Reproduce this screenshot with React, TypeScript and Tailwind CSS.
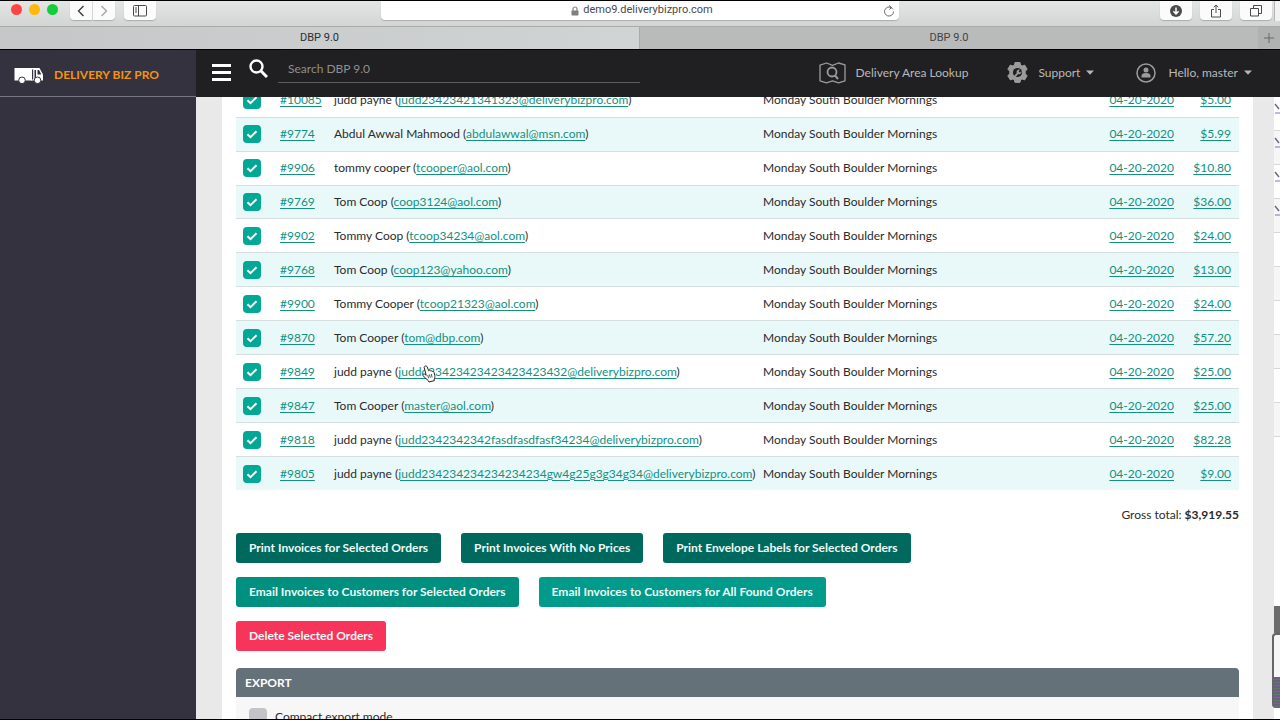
import type { ReactNode } from "react";

type Order = {
  id: string;
  name: string;
  email: string;
  total: string;
};

const ROUTE = "Monday South Boulder Mornings";
const DELIVERY_DATE = "04-20-2020";

const orders: Order[] = [
  { id: "10085", name: "judd payne", email: "judd23423421341323@deliverybizpro.com", total: "$5.00" },
  { id: "9774", name: "Abdul Awwal Mahmood", email: "abdulawwal@msn.com", total: "$5.99" },
  { id: "9906", name: "tommy cooper", email: "tcooper@aol.com", total: "$10.80" },
  { id: "9769", name: "Tom Coop", email: "coop3124@aol.com", total: "$36.00" },
  { id: "9902", name: "Tommy Coop", email: "tcoop34234@aol.com", total: "$24.00" },
  { id: "9768", name: "Tom Coop", email: "coop123@yahoo.com", total: "$13.00" },
  { id: "9900", name: "Tommy Cooper", email: "tcoop21323@aol.com", total: "$24.00" },
  { id: "9870", name: "Tom Cooper", email: "tom@dbp.com", total: "$57.20" },
  { id: "9849", name: "judd payne", email: "juddd23423423423423423432@deliverybizpro.com", total: "$25.00" },
  { id: "9847", name: "Tom Cooper", email: "master@aol.com", total: "$25.00" },
  { id: "9818", name: "judd payne", email: "judd2342342342fasdfasdfasf34234@deliverybizpro.com", total: "$82.28" },
  { id: "9805", name: "judd payne", email: "judd234234234234234234gw4g25g3g34g34@deliverybizpro.com", total: "$9.00" },
];

const ToolbarButton = ({ label, children }: { label: string; children: ReactNode }) => (
  <button
    type="button"
    aria-label={label}
    className="flex h-[19px] w-8 items-center justify-center rounded-b bg-[#fbfbfb] text-[#4a4a4a] shadow-[0_1px_1px_rgba(0,0,0,0.2)]"
  >
    {children}
  </button>
);

const BrowserToolbar = () => (
  <div className="grid h-[26px] grid-cols-[1fr_518px_1fr] items-start border-t border-black bg-linear-to-b from-[#e4e5e5] to-[#d3d4d4]">
    <div className="flex items-start">
      <div className="mt-[3px] ml-[11px] flex gap-[7px]">
        <span className="size-[11px] rounded-full bg-[#fc4645]" />
        <span className="size-[11px] rounded-full bg-[#fdb80f]" />
        <span className="size-[11px] rounded-full bg-[#14cc3c]" />
      </div>
      <div className="mr-[9px] ml-3 flex gap-px">
        <button type="button" aria-label="Back" className="flex h-[19px] w-[22px] items-center justify-center rounded-bl bg-[#fbfbfb] text-[#3c3c3c] shadow-[0_1px_1px_rgba(0,0,0,0.2)]">
          <svg width="8" height="12" viewBox="0 0 8 12" fill="none" stroke="currentColor" strokeWidth="1.4">
            <path d="M6.5 1 1.5 6l5 5" />
          </svg>
        </button>
        <button type="button" aria-label="Forward" className="flex h-[19px] w-[22px] items-center justify-center rounded-br bg-[#fbfbfb] text-[#a6a6a6] shadow-[0_1px_1px_rgba(0,0,0,0.2)]">
          <svg width="8" height="12" viewBox="0 0 8 12" fill="none" stroke="currentColor" strokeWidth="1.4">
            <path d="m1.5 1 5 5-5 5" />
          </svg>
        </button>
      </div>
      <ToolbarButton label="Show sidebar">
        <svg width="14" height="12" viewBox="0 0 14 12" fill="none" stroke="currentColor">
          <rect x="0.5" y="0.5" width="13" height="10.5" rx="1" />
          <path d="M5.5.5V11M2 3h2M2 5h2M2 7h2" />
        </svg>
      </ToolbarButton>
    </div>
    <div className="flex h-[19px] items-center rounded-b bg-white px-1 text-[#4a4a4a] shadow-[0_1px_1px_rgba(0,0,0,0.2)]">
      <div className="flex flex-1 items-center justify-center gap-1 pl-4">
        <svg width="8" height="10" viewBox="0 0 8 10" className="text-[#808080]">
          <path d="M2 5V3a2 2 0 0 1 4 0v2" fill="none" stroke="currentColor" strokeWidth="1.2" />
          <rect x="0.5" y="4.5" width="7" height="5" rx="0.7" fill="currentColor" />
        </svg>
        <span>demo9.deliverybizpro.com</span>
      </div>
      <button type="button" aria-label="Reload">
        <svg width="12" height="12" viewBox="0 0 12 12" fill="none" stroke="#6a6a6a">
          <path d="M9.9 4.3A4.5 4.5 0 1 0 10.5 6.6M6 .5l2.6 2L6.3 4.6" />
        </svg>
      </button>
    </div>
    <div className="flex justify-end gap-2">
      <ToolbarButton label="Downloads">
        <svg width="12" height="12" viewBox="0 0 12 12">
          <circle cx="6" cy="6" r="6" fill="currentColor" />
          <path d="M6 2.6v6M3.4 6.2 6 8.9l2.6-2.7" fill="none" stroke="#fff" strokeWidth="1.5" />
        </svg>
      </ToolbarButton>
      <ToolbarButton label="Share">
        <svg width="12" height="14" viewBox="0 0 12 14" fill="none" stroke="currentColor">
          <path d="M4 5.5H1.5V13h9V5.5H8M6 9V1M3.7 3.2 6 1l2.3 2.2" />
        </svg>
      </ToolbarButton>
      <ToolbarButton label="Show tabs">
        <svg width="12" height="12" viewBox="0 0 12 12" fill="none" stroke="currentColor">
          <path d="M.5 3.5h8V11h-8zM3.500 3.500v-3h8v8h-3" />
        </svg>
      </ToolbarButton>
      <span className="-ml-1.5 h-5 w-1.5 border-l border-[#b5b5b5] bg-[#f2f2f4]" />
    </div>
  </div>
);

const BrowserTabs = () => (
  <div className="flex h-6 border-t border-b border-t-[#a9aaaa] border-b-black text-[#2d2d2d]">
    <button type="button" className="basis-1/2 border-r border-[#a9aaaa] bg-linear-to-r from-[#c5c6c8] to-[#d0d4d4]">
      DBP 9.0
    </button>
    <button type="button" className="flex-1 bg-[#b9bbbb] text-[#444]">
      DBP 9.0
    </button>
    <button type="button" aria-label="New tab" className="flex w-[22px] items-center justify-center bg-[#b0b2b2]">
      <svg width="10" height="10" viewBox="0 0 10 10" stroke="#666">
        <path d="M5 0v10M0 5h10" />
      </svg>
    </button>
  </div>
);

const TruckIcon = () => (
  <svg width="30" height="17" viewBox="0 0 30 17">
    <path d="M.5 1h17.500v12.500H.5z" fill="#fff" />
    <path d="M17 1h8.500L29 7.500v6H17z" fill="#fff" />
    <path d="M18 2.500h1.200v10H18zM20.500 3h1.500v9.500h-1.500zM23.500 3h1.500l2.300 4.500h-3.800z" fill="#34323e" />
    <circle cx="8" cy="13.300" r="3.300" fill="#fff" stroke="#34323e" strokeWidth="1" />
    <circle cx="23.500" cy="13.300" r="3.300" fill="#fff" stroke="#34323e" strokeWidth="1" />
  </svg>
);

const MapSearchIcon = () => (
  <svg width="27" height="22" viewBox="0 0 27 22" fill="none" stroke="#9b9b9b" strokeWidth="1.3">
    <path d="M1 3.200 7.500 1l6 2.300 6-2.300L26 2.800v16l-6.500 2-6-2-6 2L1 18.800z" strokeLinejoin="round" />
    <circle cx="13" cy="10" r="4.500" strokeWidth="1.800" />
    <path d="m16 13.500 3 3.500" strokeWidth="2" />
  </svg>
);

const GearWrenchIcon = () => (
  <svg width="21" height="21" viewBox="0 0 21 21">
    <path
      d="M8 .5h5l.6 2.600 1.500.9 2.600-.9 2.500 4.200-2 1.900v2.600l2 1.900-2.500 4.200-2.600-.9-1.500.9-.6 2.500H8l-.6-2.500-1.500-.9-2.600.9L.8 13.700l2-1.900V9.200l-2-1.900L3.300 3.100l2.600.9 1.500-.9z"
      fill="#9b9b9b"
      stroke="#9b9b9b"
      strokeLinejoin="round"
    />
    <circle cx="10.500" cy="10.500" r="4.600" fill="#202022" />
    <path d="M7 14 9.800 11a2.500 2.500 0 0 1 3.200-3.300l-1.300 1.500.6 1 1 .2L14.500 9a2.500 2.500 0 0 1-3.300 3L8.500 15z" fill="#9b9b9b" />
  </svg>
);

const UserCircleIcon = () => (
  <svg width="20" height="20" viewBox="0 0 20 20">
    <circle cx="10" cy="10" r="9" fill="none" stroke="#9b9b9b" strokeWidth="1.500" />
    <circle cx="10" cy="7" r="2.500" fill="#9b9b9b" />
    <path d="M5.500 14.500V13c0-2 1.500-3 4.500-3s4.500 1 4.500 3v1.500z" fill="#9b9b9b" />
  </svg>
);

const Caret = () => (
  <svg width="8" height="5" viewBox="0 0 8 5" className="ml-1.5">
    <path d="M0 .5h8L4 4.800z" fill="#b5b5b5" />
  </svg>
);

const AppHeader = () => (
  <header className="flex h-[47px] shrink-0 bg-[#202022] text-[#b9b9b9]">
    <a href="#" className="flex w-[196px] shrink-0 items-center gap-2.5 border-b border-[#777581] bg-[#34323e] pt-1 pl-3.5 font-bold text-[#f3920f]">
      <TruckIcon />
      DELIVERY BIZ PRO
    </a>
    <button type="button" aria-label="Menu" className="mb-0.5 ml-4 flex shrink-0 flex-col justify-center gap-1">
      <span className="h-[3px] w-[19px] bg-white" />
      <span className="h-[3px] w-[19px] bg-white" />
      <span className="h-[3px] w-[19px] bg-white" />
    </button>
    <button type="button" aria-label="Search" className="mb-2.5 ml-[18px] shrink-0">
      <svg width="19" height="19" viewBox="0 0 19 19" fill="none" stroke="#fff">
        <circle cx="7.500" cy="7.500" r="6" strokeWidth="2.400" />
        <path d="m12 12 6 6" strokeWidth="3" />
      </svg>
    </button>
    <input
      type="text"
      aria-label="Search"
      placeholder="Search DBP 9.0"
      className="mt-1 ml-2.5 h-[29px] w-[362px] border-b border-[#5c5c5c] bg-transparent px-2.5 outline-none placeholder:text-[#8f8f8f]"
    />
    <nav className="ml-auto flex items-center pr-7 pb-0.5">
      <a href="#" className="flex items-center gap-2.5">
        <MapSearchIcon />
        Delivery Area Lookup
      </a>
      <button type="button" className="ml-[39px] flex items-center">
        <span className="mr-2.5">
          <GearWrenchIcon />
        </span>
        Support
        <Caret />
      </button>
      <button type="button" className="ml-[42px] flex items-center">
        <span className="mr-3">
          <UserCircleIcon />
        </span>
        Hello, master
        <Caret />
      </button>
    </nav>
  </header>
);

const OrderCheckbox = ({ id }: { id: string }) => (
  <label className="grid size-[18px]">
    <input
      type="checkbox"
      defaultChecked
      aria-label={`Select order ${id}`}
      className="col-start-1 row-start-1 size-[18px] appearance-none rounded bg-[#c4c4c8] checked:bg-[#02a896]"
    />
    <svg viewBox="0 0 18 18" className="pointer-events-none col-start-1 row-start-1 size-[18px]" fill="none" stroke="#fff" strokeWidth="2">
      <path d="m4.500 9.200 3 3 6-6" />
    </svg>
  </label>
);

const TableLink = ({ children }: { children: ReactNode }) => (
  <a href="#" className="text-[#12917f] underline underline-offset-2">
    {children}
  </a>
);

const OrdersTable = () => (
  <table className="h-[406px] w-full table-fixed border-collapse text-left whitespace-nowrap">
    <colgroup>
      <col className="w-9" />
      <col className="w-[54px]" />
      <col className="w-[429px]" />
      <col />
      <col className="w-20" />
      <col className="w-[57px]" />
    </colgroup>
    <tbody>
      {orders.map((order) => (
        <tr key={order.id} className="border-b border-[#d5dfe0] last:border-0 even:bg-[#e9f9fa]">
          <td className="pl-[7px]">
            <OrderCheckbox id={order.id} />
          </td>
          <td className="pl-2">
            <TableLink>#{order.id}</TableLink>
          </td>
          <td className="pl-2">
            {order.name} (<TableLink>{order.email}</TableLink>)
          </td>
          <td className="pl-2">{ROUTE}</td>
          <td className="pr-2 text-right">
            <TableLink>{DELIVERY_DATE}</TableLink>
          </td>
          <td className="pr-2 text-right">
            <TableLink>{order.total}</TableLink>
          </td>
        </tr>
      ))}
    </tbody>
  </table>
);

const ActionButton = ({ tone, children }: { tone: string; children: ReactNode }) => (
  <button type="button" className={`h-[30px] rounded-[3px] px-[13px] font-bold text-[#eefaf8] ${tone}`}>
    {children}
  </button>
);

const OrderActions = () => (
  <div className="flex flex-col gap-3.5">
    <div className="flex flex-wrap gap-5">
      <ActionButton tone="bg-[#00695e]">Print Invoices for Selected Orders</ActionButton>
      <ActionButton tone="bg-[#00695e]">Print Invoices With No Prices</ActionButton>
      <ActionButton tone="bg-[#00695e]">Print Envelope Labels for Selected Orders</ActionButton>
    </div>
    <div className="flex flex-wrap gap-5">
      <ActionButton tone="bg-[#009080]">Email Invoices to Customers for Selected Orders</ActionButton>
      <ActionButton tone="bg-[#009b8a]">Email Invoices to Customers for All Found Orders</ActionButton>
    </div>
    <div className="flex">
      <ActionButton tone="bg-[#f73459]">Delete Selected Orders</ActionButton>
    </div>
  </div>
);

const ExportPanel = () => (
  <section className="mt-[17px] overflow-hidden rounded-t bg-[#f7f7f7]">
    <h2 className="flex h-[29px] items-center bg-[#657178] px-[9px] font-bold text-white">EXPORT</h2>
    <label className="flex items-center gap-2 px-[13px] py-[11px]">
      <input type="checkbox" className="size-[18px] appearance-none rounded bg-[#c4c4c8] checked:bg-[#02a896]" />
      Compact export mode
    </label>
  </section>
);

// Sliver of the window that sits behind the browser, at the right edge
const BackgroundWindow = () => (
  <div className="flex w-1.5 shrink-0 flex-col bg-white">
    {orders.slice(0, 10).map((order, index) => (
      <div key={order.id} className="h-[34px] border-b border-[#d8d8d8] odd:bg-white even:bg-[#f6f6f7]">
        {index < 4 && (
          <svg width="6" height="14" viewBox="0 0 6 14" fill="none" className="mt-1">
            <path d="m1 3 4 5" stroke="#6f6a7d" strokeWidth="1.500" />
            <path d="M1 12h5" stroke="#7a74b8" />
          </svg>
        )}
      </div>
    ))}
    <div className="mt-auto h-[27px] bg-[#6c6c6c]" />
    <div className="-ml-0.5 h-11 rounded-tl border-t-2 border-l-2 border-[#666] bg-[#f6f6f6]" />
    <div className="mb-[11px] -ml-0.5 h-[31px] rounded-bl border-l-2 border-[#666] bg-[repeating-linear-gradient(#6d5d83_0_2px,#5d7c62_2px_3px)]" />
  </div>
);

const HandCursor = () => (
  <svg width="14" height="18" viewBox="0 0 14 18" className="pointer-events-none absolute top-[365px] left-[422px]">
    <path
      d="M3 1.200c1-.6 1.900 0 2.200.8l1.500 3.800c.6-.7 1.500-.5 1.800.2.7-.5 1.500-.2 1.700.5.800-.4 1.600 0 1.800.8l.8 3.200c.3 1.500-.1 2.500-.6 3.600l.2 1.500-5.400 1.400-.7-1.400L2.200 12C1.200 11 .6 10 1 9.400c.5-.7 1.500-.5 2.300.2l.9.7L2.300 3c-.3-.8 0-1.400.7-1.800z"
      fill="#fff"
      stroke="#222"
    />
    <path d="m7.500 9.500.8 3.300M9.300 9l.8 3.300M5.800 10l.7 3.200" stroke="#222" strokeWidth="0.800" />
  </svg>
);

export default function App() {
  return (
    <div className="relative flex h-screen flex-col overflow-hidden border-b border-black bg-[#e9e9e9] font-['Lato',sans-serif] text-[12px] text-[#2b2b2b]">
      <div className="shrink-0 font-['Roboto',sans-serif] text-[11px]">
        <BrowserToolbar />
        <BrowserTabs />
      </div>
      <AppHeader />
      <div className="flex min-h-0 flex-1">
        <aside className="w-[196px] shrink-0 bg-[#34323e]" />
        <main className="ml-[26px] min-w-0 flex-1 overflow-hidden bg-white px-3.5">
          <div className="-mt-[13px]">
            <OrdersTable />
            <p className="mt-[15px] mb-2 text-right leading-5">
              Gross total: <strong>$3,919.55</strong>
            </p>
            <OrderActions />
            <ExportPanel />
          </div>
        </main>
        <div className="w-[21px] shrink-0" />
        <BackgroundWindow />
      </div>
      <HandCursor />
    </div>
  );
}
